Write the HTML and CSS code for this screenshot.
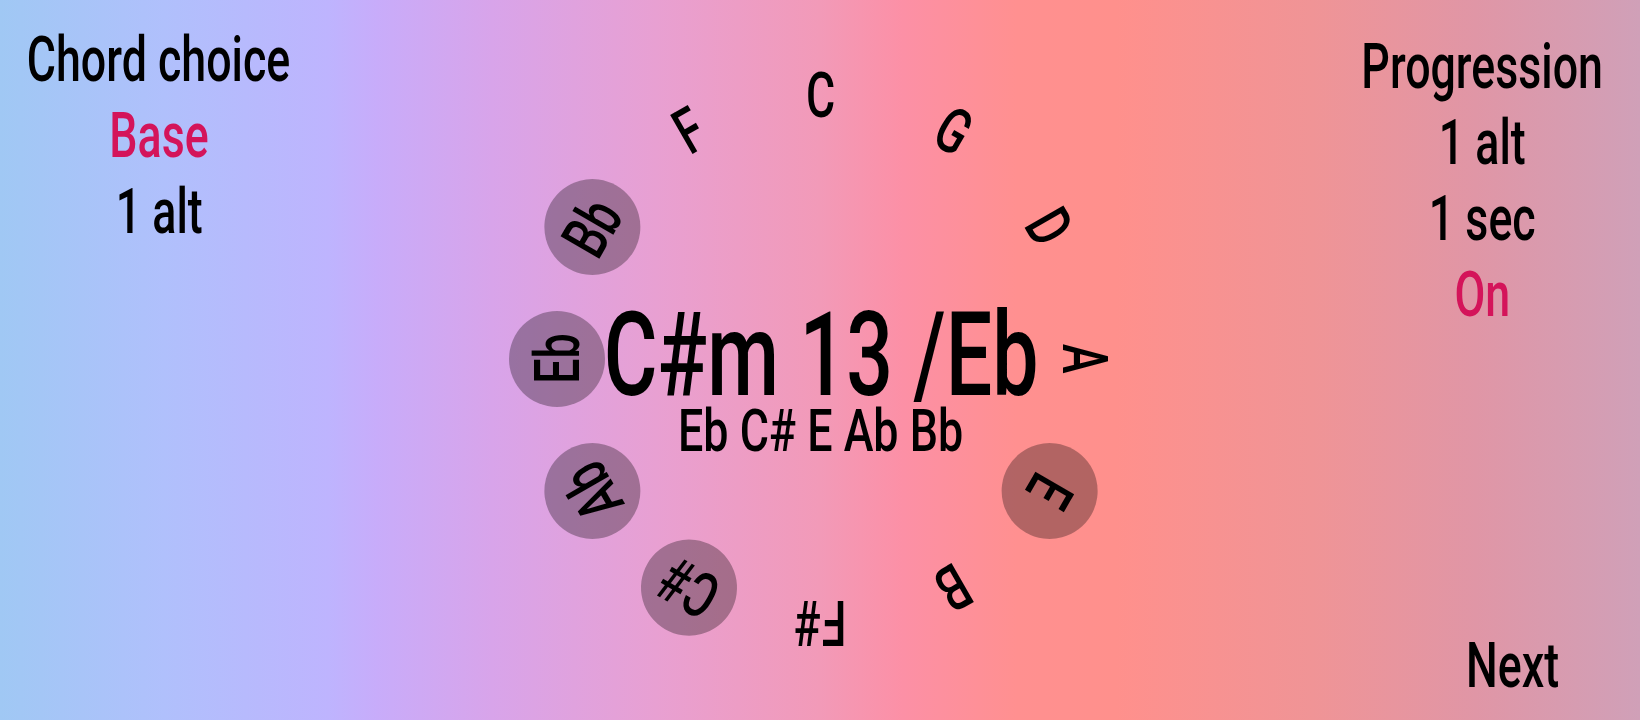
FILE: index.html
```html
<!DOCTYPE html>
<html lang="en">
<head>
<meta charset="utf-8">
<title>Chord wheel</title>
<link rel="stylesheet" href="styles.css">
</head>
<body>
<div class="app">
  <aside class="panel panel-left">
    <div class="item"><span class="t">Chord choice</span></div>
    <div class="item active"><span class="t">Base</span></div>
    <div class="item"><span class="t">1 alt</span></div>
  </aside>
  <main class="wheel">
    <div class="note" style="--a:0deg"><span class="t">C</span></div>
    <div class="note" style="--a:30deg"><span class="t">G</span></div>
    <div class="note" style="--a:60deg"><span class="t">D</span></div>
    <div class="note" style="--a:90deg"><span class="t">A</span></div>
    <div class="note sel" style="--a:120deg"><span class="t">E</span></div>
    <div class="note" style="--a:150deg"><span class="t">B</span></div>
    <div class="note" style="--a:180deg"><span class="t">F#</span></div>
    <div class="note sel" style="--a:210deg"><span class="t">C#</span></div>
    <div class="note sel" style="--a:240deg"><span class="t">Ab</span></div>
    <div class="note sel" style="--a:270deg"><span class="t">Eb</span></div>
    <div class="note sel" style="--a:300deg"><span class="t">Bb</span></div>
    <div class="note" style="--a:330deg"><span class="t">F</span></div>
    <div class="center">
      <div class="chord"><span class="t">C#m 13 /Eb</span></div>
      <div class="notes"><span class="t">Eb C# E Ab Bb</span></div>
    </div>
  </main>
  <aside class="panel panel-right">
    <div class="item"><span class="t">Progression</span></div>
    <div class="item"><span class="t">1 alt</span></div>
    <div class="item"><span class="t">1 sec</span></div>
    <div class="item active"><span class="t">On</span></div>
    <div class="item next"><span class="t">Next</span></div>
  </aside>
</div>
</body>
</html>
```
FILE: styles.css
```css
html, body {
  margin: 0;
  padding: 0;
}
body {
  width: 1640px;
  height: 720px;
  overflow: hidden;
  font-family: "Roboto", "Liberation Sans", sans-serif;
  font-weight: 500;
  color: #000;
  background: linear-gradient(90deg,
    #a0c8f4 0%,
    #b0c0fc 10%,
    #beb4fe 20%,
    #c8acfa 23%,
    #d8a4ea 30%,
    #e8a0d2 40%,
    #f29ab8 50%,
    #fc90a6 55%,
    #ff9090 62%,
    #ff908c 68%,
    #f09496 80%,
    #e096a6 90%,
    #d0a0b8 100%);
}
.app {
  display: grid;
  grid-template-columns: 318px 1fr 316px;
  height: 720px;
}
.panel {
  display: flex;
  flex-direction: column;
  align-items: center;
}
.panel-left {
  padding-top: 22px;
}
.panel-right {
  padding-top: 29px;
  padding-bottom: 16px;
}
.t {
  display: inline-block;
  transform: scaleX(0.71);
  white-space: nowrap;
}
.item {
  font-size: 63px;
  line-height: 76px;
  white-space: nowrap;
}
.active {
  color: #d4145a;
}
.next {
  margin-top: auto;
  margin-left: 62px;
}
.wheel {
  position: relative;
  display: flex;
  align-items: center;
  justify-content: center;
}
.note {
  position: absolute;
  left: 50%;
  top: 359px;
  width: 96px;
  height: 96px;
  margin: -48px 0 0 -48px;
  display: flex;
  align-items: center;
  justify-content: center;
  border-radius: 50%;
  transform: rotate(var(--a)) translateY(-264px);
  font-size: 63px;
  line-height: 1;
}
.sel {
  background: rgba(0, 0, 0, 0.3);
}
.center {
  margin-top: 42px;
  display: flex;
  flex-direction: column;
  align-items: center;
}
.chord {
  font-size: 116px;
  line-height: 100px;
  white-space: nowrap;
}
.notes {
  font-size: 59px;
  line-height: 52px;
  white-space: nowrap;
}
.notes .t {
  transform: scaleX(0.76);
}
```
